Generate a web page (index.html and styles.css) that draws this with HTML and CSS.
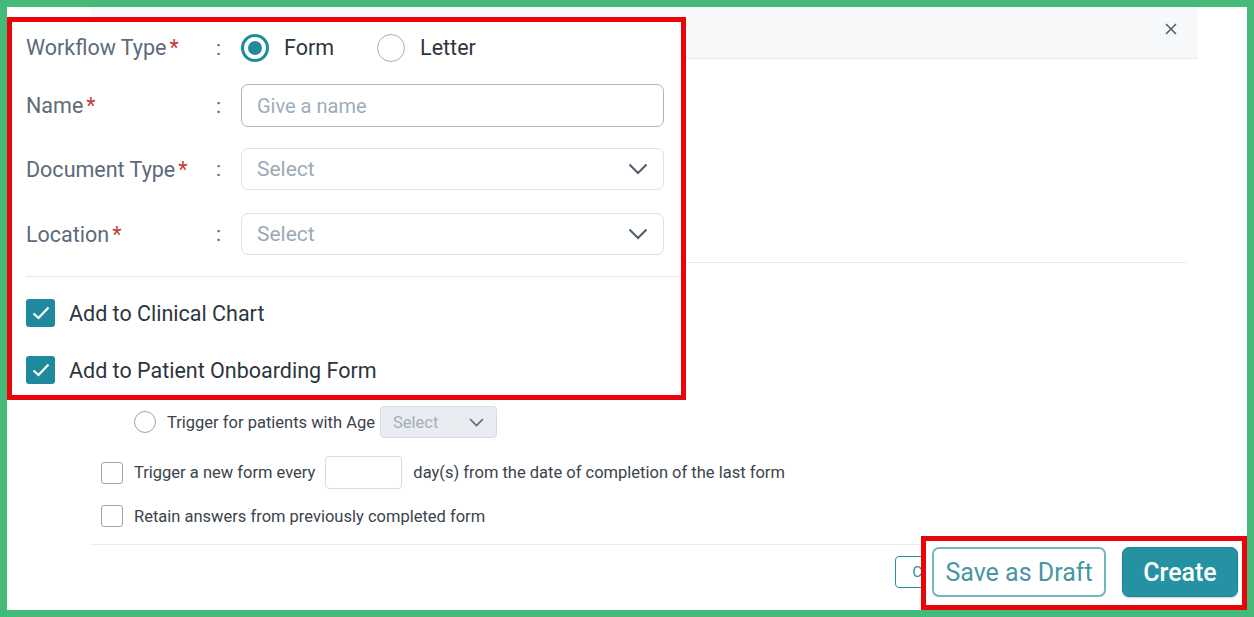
FILE: index.html
```html
<!DOCTYPE html>
<html lang="en">
<head>
<meta charset="utf-8">
<title>New Workflow</title>
<link rel="stylesheet" href="styles.css">
</head>
<body>
<div class="frame">
  <div class="modal">
    <div class="modal-header">
      <svg class="close" width="12" height="12" viewBox="0 0 12 12"><path d="M1 1L11 11M11 1L1 11" stroke="#4b5b6b" stroke-width="1.5" fill="none"/></svg>
    </div>
    <div class="modal-body">
      <div class="top-section"></div>
      <div class="options">
        <div class="opt-row row-age">
          <span class="radio-sm"></span>
          <span class="opt-text">Trigger for patients with Age</span>
          <div class="age-select">
            <span>Select</span>
            <svg width="15" height="9" viewBox="0 0 15 9"><path d="M1 1L7.5 7.5L14 1" stroke="#59687a" stroke-width="1.6" fill="none"/></svg>
          </div>
        </div>
        <div class="opt-row row-every">
          <span class="box-sm"></span>
          <span class="opt-text">Trigger a new form every</span>
          <span class="days-input"></span>
          <span class="opt-text">day(s) from the date of completion of the last form</span>
        </div>
        <div class="opt-row row-retain">
          <span class="box-sm"></span>
          <span class="opt-text">Retain answers from previously completed form</span>
        </div>
      </div>
    </div>
    <div class="modal-footer">
      <button class="btn-sm btn-cancel">Cancel</button>
      <button class="btn-sm btn-draft-sm">Save as Draft</button>
      <button class="btn-sm btn-create-sm">Create</button>
    </div>
  </div>

  <div class="callout callout-form">
    <div class="form-row row-workflow">
      <div class="label">Workflow Type<span class="req">*</span></div>
      <div class="colon">:</div>
      <div class="radio-group">
        <span class="radio radio-on"></span><span class="radio-text">Form</span>
        <span class="radio radio-off"></span><span class="radio-text">Letter</span>
      </div>
    </div>
    <div class="form-row row-name">
      <div class="label">Name<span class="req">*</span></div>
      <div class="colon">:</div>
      <input class="text-input" type="text" placeholder="Give a name">
    </div>
    <div class="form-row row-doc">
      <div class="label">Document Type<span class="req">*</span></div>
      <div class="colon">:</div>
      <div class="select">
        <span>Select</span>
        <svg width="20" height="12" viewBox="0 0 20 12"><path d="M1.5 1.5L10 10L18.5 1.5" stroke="#4e5d6c" stroke-width="2" fill="none"/></svg>
      </div>
    </div>
    <div class="form-row row-loc">
      <div class="label">Location<span class="req">*</span></div>
      <div class="colon">:</div>
      <div class="select">
        <span>Select</span>
        <svg width="20" height="12" viewBox="0 0 20 12"><path d="M1.5 1.5L10 10L18.5 1.5" stroke="#4e5d6c" stroke-width="2" fill="none"/></svg>
      </div>
    </div>
    <div class="divider"></div>
    <div class="check-row row-chart">
      <span class="check"><svg width="18" height="14" viewBox="0 0 18 14"><path d="M1.5 7.5L6.5 12L16.5 1.5" stroke="#fff" stroke-width="2.2" fill="none"/></svg></span>
      <span class="check-text">Add to Clinical Chart</span>
    </div>
    <div class="check-row row-onboard">
      <span class="check"><svg width="18" height="14" viewBox="0 0 18 14"><path d="M1.5 7.5L6.5 12L16.5 1.5" stroke="#fff" stroke-width="2.2" fill="none"/></svg></span>
      <span class="check-text">Add to Patient Onboarding Form</span>
    </div>
  </div>

  <div class="callout callout-actions">
    <button class="btn-draft">Save as Draft</button>
    <button class="btn-create">Create</button>
  </div>
</div>
</body>
</html>
```

FILE: styles.css
```css
* { box-sizing: border-box; }

html, body {
  margin: 0;
  padding: 0;
  background: #ffffff;
}

body {
  font-family: Roboto, "Noto Sans", Arial, sans-serif;
}

.frame {
  position: relative;
  width: 1254px;
  height: 617px;
  border: 7px solid #43ba77;
  background: #ffffff;
  overflow: hidden;
}

/* ---------- underlying modal ---------- */
.modal {
  margin-left: 83px;
  width: 1108px;
}

.modal-header {
  height: 52px;
  background: #f6f8fa;
  border-bottom: 1px solid #e8ebef;
  display: flex;
  justify-content: flex-end;
  align-items: flex-start;
  padding: 16px 21px 0 0;
}

.close { display: block; }

.modal-body {
  padding: 0 11px 17px 11px;
}

.top-section {
  height: 204px;
  border-bottom: 1px solid #e8ebef;
}

.options {
  padding-top: 143px;
  display: flex;
  flex-direction: column;
}

.opt-row {
  display: flex;
  align-items: center;
  font-size: 16.5px;
  color: #3b434c;
}

.row-age {
  height: 32px;
  padding-left: 33px;
}

.row-every {
  height: 33px;
  margin-top: 18px;
}

.row-retain {
  height: 22px;
  margin-top: 16px;
}

.radio-sm {
  width: 22px;
  height: 22px;
  border: 1.5px solid #9aa6b2;
  border-radius: 50%;
  margin-right: 11px;
  flex: none;
}

.box-sm {
  width: 22px;
  height: 22px;
  border: 1.5px solid #9aa6b2;
  border-radius: 3px;
  margin-right: 11px;
  flex: none;
}

.age-select {
  margin-left: 5px;
  width: 117px;
  height: 32px;
  background: #e9edf1;
  border: 1px solid #d6dce2;
  border-radius: 4px;
  display: flex;
  align-items: center;
  justify-content: space-between;
  padding: 0 12px 0 12px;
  color: #a3aeb9;
  font-size: 16.5px;
}

.days-input {
  width: 77px;
  height: 33px;
  border: 1px solid #d6dce2;
  border-radius: 4px;
  margin: 0 11px 0 10px;
}

.modal-footer {
  border-top: 1px solid #e8ebef;
  padding: 11px 11px 0 0;
  display: flex;
  justify-content: flex-end;
  gap: 10px;
}

.btn-sm {
  height: 32px;
  border-radius: 4px;
  font-family: inherit;
  font-size: 15px;
  border: 1px solid #2a8fa0;
  background: #ffffff;
  color: #2a8fa0;
  padding: 0;
}

.btn-cancel { width: 80px; }
.btn-draft-sm { width: 118px; visibility: hidden; }
.btn-create-sm { width: 74px; background: #2592a4; color: #fff; visibility: hidden; }

/* ---------- callouts ---------- */
.callout {
  position: absolute;
  border: 5px solid #e8050a;
  background: #ffffff;
}

.callout-form {
  left: 0;
  top: 10px;
  width: 679px;
  height: 383px;
  padding: 11px 0 0 14px;
  display: flex;
  flex-direction: column;
}

.form-row {
  display: grid;
  grid-template-columns: 190px 25px 423px;
  align-items: center;
}

.label {
  font-size: 21.5px;
  color: #5c6a79;
  white-space: nowrap;
}

.req {
  color: #c23a35;
  margin-left: 3px;
}

.colon {
  font-size: 21px;
  color: #5c6a79;
}

.row-workflow { height: 29px; }
.row-name { height: 43px; margin-top: 22px; }
.row-doc { height: 42px; margin-top: 21px; }
.row-loc { height: 42px; margin-top: 23px; }

.radio-group {
  display: flex;
  align-items: center;
}

.radio {
  width: 28px;
  height: 28px;
  border-radius: 50%;
  flex: none;
  display: flex;
  align-items: center;
  justify-content: center;
}

.radio-on {
  border: 3px solid #1e8c9c;
}

.radio-on::after {
  content: "";
  width: 14px;
  height: 14px;
  border-radius: 50%;
  background: #1e8c9c;
}

.radio-off {
  border: 1.5px solid #a4b0bc;
  margin-left: 43px;
}

.radio-text {
  font-size: 21.5px;
  color: #2d3540;
  margin-left: 15px;
}

.text-input {
  width: 423px;
  height: 43px;
  border: 1.5px solid #a9b5c0;
  border-radius: 7px;
  padding: 0 15px;
  font-family: inherit;
  font-size: 20px;
  color: #2d3540;
  outline: none;
}

.text-input::placeholder {
  color: #a0acb7;
}

.select {
  width: 423px;
  height: 42px;
  border: 1.5px solid #dce2e9;
  border-radius: 7px;
  padding: 0 15px;
  display: flex;
  align-items: center;
  justify-content: space-between;
  font-size: 21px;
  color: #9ea9b5;
}

.select svg { display: block; }

.divider {
  margin-top: 21px;
  height: 1px;
  background: #e6e9ed;
}

.check-row {
  display: flex;
  align-items: center;
  height: 28px;
}

.row-chart { margin-top: 22px; }
.row-onboard { margin-top: 29px; }

.check {
  width: 29px;
  height: 28px;
  border-radius: 3px;
  background: #1f8a9d;
  display: flex;
  align-items: center;
  justify-content: center;
  flex: none;
}

.check svg { display: block; }

.check-text {
  margin-left: 14px;
  font-size: 21.5px;
  color: #2d3540;
}

.callout-actions {
  right: 0;
  bottom: 0;
  width: 326px;
  height: 74px;
  padding: 6px 4px 0 6px;
  display: flex;
  align-items: flex-start;
  gap: 16px;
}

.btn-draft {
  width: 174px;
  height: 50px;
  border: 2px solid #72b5c1;
  border-radius: 7px;
  background: #ffffff;
  color: #4896a4;
  font-family: inherit;
  font-size: 25px;
  padding: 0;
}

.btn-create {
  width: 116px;
  height: 50px;
  border: 1px solid #1f8394;
  border-radius: 7px;
  background: #2592a4;
  color: #ffffff;
  font-family: inherit;
  font-size: 25px;
  font-weight: 500;
  padding: 0;
  box-shadow: 0 1px 2px rgba(0, 0, 0, 0.2);
}
```
